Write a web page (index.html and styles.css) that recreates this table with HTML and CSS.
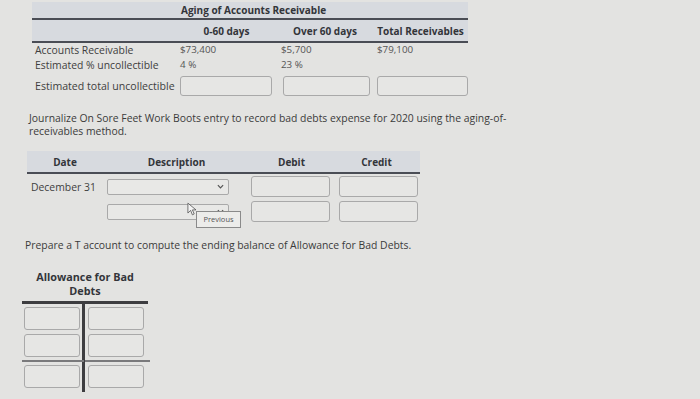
FILE: index.html
```html
<!DOCTYPE html>
<html lang="en">
<head>
<meta charset="utf-8">
<title>Aging of Accounts Receivable</title>
<link rel="stylesheet" href="styles.css">
</head>
<body>
<main class="page">
  <section class="aging">
    <div class="aging-title-row">
      <div class="cell-blank"></div>
      <div class="aging-title">Aging of Accounts Receivable</div>
    </div>
    <div class="aging-head-row">
      <div class="cell-blank"></div>
      <div class="col-head">0-60 days</div>
      <div class="col-head">Over 60 days</div>
      <div class="col-head">Total Receivables</div>
    </div>
    <div class="aging-row">
      <div class="row-label">Accounts Receivable</div>
      <div class="val">$73,400</div>
      <div class="val">$5,700</div>
      <div class="val">$79,100</div>
    </div>
    <div class="aging-row">
      <div class="row-label">Estimated % uncollectible</div>
      <div class="val">4 %</div>
      <div class="val">23 %</div>
      <div class="val"></div>
    </div>
    <div class="aging-row input-row">
      <div class="row-label">Estimated total uncollectible</div>
      <div class="box-cell"><span class="box box-a1"></span></div>
      <div class="box-cell"><span class="box box-a2"></span></div>
      <div class="box-cell"><span class="box box-a3"></span></div>
    </div>
  </section>

  <p class="prompt">Journalize On Sore Feet Work Boots entry to record bad debts expense for 2020 using the aging-of-receivables method.</p>

  <section class="journal">
    <div class="j-head">
      <div>Date</div>
      <div>Description</div>
      <div>Debit</div>
      <div>Credit</div>
    </div>
    <div class="j-row">
      <div class="j-date">December 31</div>
      <div class="j-desc"><span class="select"><svg class="chev" viewBox="0 0 8 5" width="7" height="5"><path d="M1 1l3 3 3-3" fill="none" stroke="#555" stroke-width="1.4"/></svg></span></div>
      <div class="j-amt"><span class="box"></span></div>
      <div class="j-amt"><span class="box"></span></div>
    </div>
    <div class="j-row">
      <div class="j-date"></div>
      <div class="j-desc">
        <span class="select"><svg class="chev" viewBox="0 0 8 5" width="7" height="5"><path d="M1 1l3 3 3-3" fill="none" stroke="#555" stroke-width="1.4"/></svg></span>
        <svg class="cursor" viewBox="0 0 10 15" width="9" height="14"><path d="M1 1v11l3-3 2 5 2-1-2-4.5h4z" fill="#f4f4f4" stroke="#555" stroke-width="0.9" stroke-linejoin="round"/></svg>
        <span class="tooltip">Previous</span>
      </div>
      <div class="j-amt"><span class="box"></span></div>
      <div class="j-amt"><span class="box"></span></div>
    </div>
  </section>

  <p class="prompt prompt-t">Prepare a T account to compute the ending balance of Allowance for Bad Debts.</p>

  <section class="taccount">
    <div class="t-title">Allowance for Bad<br>Debts</div>
    <div class="t-body">
      <div class="t-side">
        <span class="box t-box"></span>
        <span class="box t-box"></span>
        <span class="t-rule"></span>
        <span class="box t-box"></span>
      </div>
      <div class="t-side t-right">
        <span class="box t-box"></span>
        <span class="box t-box"></span>
        <span class="t-rule"></span>
        <span class="box t-box"></span>
      </div>
    </div>
  </section>
</main>
</body>
</html>
```

FILE: styles.css
```css
html, body {
  margin: 0;
  padding: 0;
}

body {
  background: #e3e3e1;
  color: #3b3b3b;
  font-family: "Open Sans", "Liberation Sans", sans-serif;
  font-size: 10.4px;
  width: 700px;
  height: 399px;
  overflow: hidden;
}

.page {
  padding-top: 2px;
}

/* ---------- aging table ---------- */
.aging {
  margin-left: 32px;
  width: 436px;
}

.aging-title-row,
.aging-head-row,
.aging-row {
  display: grid;
  grid-template-columns: 144px 101px 96px 95px;
}

.aging-title-row {
  background: #d7dadf;
  height: 16px;
  border-bottom: 2px solid #4a4d55;
}

.aging-title {
  grid-column: 2 / 5;
  padding-left: 5px;
  font-size: 10px;
  font-weight: 700;
  line-height: 17px;
  color: #33353a;
}

.aging-head-row {
  background: #d7dadf;
  height: 21px;
  border-bottom: 2px solid #4a4d55;
}

.col-head {
  text-align: center;
  font-size: 10px;
  font-weight: 700;
  line-height: 22px;
  color: #33353a;
}

.aging-row {
  height: 15px;
  line-height: 14px;
}

.row-label {
  padding-left: 3px;
  color: #3e3e3e;
}

.val {
  padding-left: 4px;
  font-size: 9.8px;
  color: #555;
}

.input-row {
  height: 26px;
  align-items: center;
}

.input-row .row-label {
  line-height: 24px;
  font-size: 10.6px;
}

.box-cell {
  display: flex;
  padding-left: 4px;
}

.box {
  display: block;
  box-sizing: border-box;
  border: 1px solid #a9a9a9;
  border-radius: 3px;
  background: #e6e6e4;
}

.box-a1 { width: 92px; height: 20px; }
.box-a2 { width: 87px; height: 20px; margin-left: 2px; }
.box-a3 { width: 91px; height: 20px; }

/* ---------- prompts ---------- */
.prompt {
  margin: 0;
  padding-left: 29px;
  width: 480px;
  line-height: 13px;
  color: #3b3b3b;
}

.aging + .prompt {
  margin-top: 13px;
}

.prompt-t {
  margin-top: 15px;
  padding-left: 25px;
}

/* ---------- journal ---------- */
.journal {
  margin: 13px 0 0 27px;
  width: 393px;
}

.j-head,
.j-row {
  display: grid;
  grid-template-columns: 76px 147px 83px 87px;
}

.j-head {
  background: #d7dadf;
  height: 21px;
  line-height: 22px;
  border-bottom: 2px solid #4a4d55;
  font-size: 10px;
  font-weight: 700;
  color: #33353a;
  text-align: center;
}

.j-row {
  height: 25px;
  align-items: center;
}

.j-date {
  padding-left: 4px;
  color: #3e3e3e;
}

.j-desc {
  position: relative;
  padding-left: 4px;
  height: 100%;
  display: flex;
  align-items: center;
}

.select {
  box-sizing: border-box;
  width: 122px;
  height: 16px;
  border: 1px solid #a9a9a9;
  border-radius: 2px;
  background: #e8e8e6;
  display: flex;
  align-items: center;
  justify-content: flex-end;
  padding-right: 4px;
}

.j-amt {
  padding-left: 1px;
}

.j-amt .box {
  width: 79px;
  height: 21px;
}

.j-amt + .j-amt {
  padding-left: 6px;
}

.cursor {
  position: absolute;
  left: 84px;
  top: 3px;
}

.tooltip {
  position: absolute;
  left: 93px;
  top: 12px;
  box-sizing: border-box;
  width: 45px;
  height: 17px;
  line-height: 15px;
  border: 1px solid #8a8a8a;
  background: #ececea;
  font-size: 7.5px;
  color: #555;
  text-align: center;
}

/* ---------- T account ---------- */
.taccount {
  margin: 18px 0 0 22px;
  width: 126px;
}

.t-title {
  text-align: center;
  font-size: 10.8px;
  font-weight: 700;
  line-height: 14px;
  color: #33353a;
}

.t-body {
  margin-top: 3px;
  border-top: 3px solid #3d3d40;
  display: grid;
  grid-template-columns: 63px 63px;
  height: 88px;
}

.t-side {
  display: flex;
  flex-direction: column;
  padding: 3px 0 0 2px;
  border-right: 3px solid #3d3d40;
}

.t-right {
  border-right: 0;
  padding-left: 3px;
}

.t-box {
  width: 56px;
  height: 23px;
  margin-bottom: 4px;
}

.t-side .t-rule {
  display: block;
  height: 2px;
  background: #7a7a7c;
  margin: -1px -2px 3px -2px;
}

.t-right .t-rule {
  margin-left: -3px;
}
```
